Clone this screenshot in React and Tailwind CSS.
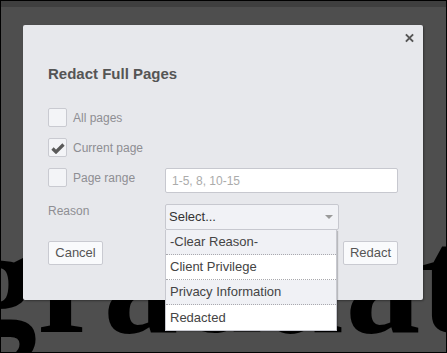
import React from 'react';

const reasons = [
  { label: '-Clear Reason-', shaded: true },
  { label: 'Client Privilege', shaded: false },
  { label: 'Privacy Information', shaded: true },
  { label: 'Redacted', shaded: false },
];

function Checkbox({ checked }) {
  return (
    <span className="flex h-[19px] w-[19px] shrink-0 items-center justify-center rounded-[2px] border border-[#c9cad1] bg-[#f3f4f7]">
      {checked && (
        <svg width="14" height="12" viewBox="0 0 14 12">
          <path d="M1.5 6.5 L5 10 L12.5 2.5" fill="none" stroke="#5a5a5a" strokeWidth="3.2" />
        </svg>
      )}
    </span>
  );
}

function Option({ label, checked }) {
  return (
    <div className="flex h-[19px] items-center gap-[6px]">
      <Checkbox checked={checked} />
      <span className="text-[12px] leading-none text-[#8e8e93]">{label}</span>
    </div>
  );
}

export default function App() {
  return (
    <div
      className="relative h-[353px] w-[447px] overflow-hidden border border-black bg-[#4e4e4e]"
      style={{ fontFamily: '"Liberation Sans", Arial, sans-serif' }}
    >
      {/* page behind the dialog */}
      <div className="h-[6px] bg-[#3f3f3f]" />
      <div
        className="ml-[-39px] mt-[199px] whitespace-nowrap text-[150px] font-bold leading-none text-black"
        style={{ fontFamily: '"Liberation Serif", "Times New Roman", serif' }}
      >
        graduation
      </div>

      {/* dialog */}
      <div className="absolute left-[22px] top-[24px] w-[400px] rounded-[2px] bg-[#e7e8ec] px-[25px] pb-[35px] pt-[40px] shadow-[1px_1px_2px_rgba(0,0,0,0.35)]">
        <button className="absolute right-[9px] top-[8px] flex h-[9px] w-[9px] items-center justify-center">
          <svg width="10" height="10" viewBox="0 0 10 10">
            <path d="M1 1 L9 9 M9 1 L1 9" stroke="#555" strokeWidth="2.2" />
          </svg>
        </button>

        <h1 className="h-[18px] text-[15px] font-bold leading-[18px] text-[#555]">Redact Full Pages</h1>

        <div className="mt-[25px] flex flex-col gap-[11px]">
          <Option label="All pages" />
          <Option label="Current page" checked />
          <div className="flex items-start">
            <div className="w-[117px]">
              <Option label="Page range" />
            </div>
            <div className="flex h-[25px] w-[233px] items-center rounded-[2px] border border-[#c7c8cf] bg-white px-[6px] text-[12px] text-[#ababab]">
              1-5, 8, 10-15
            </div>
          </div>

          <div className="flex items-start">
            <div className="w-[117px] pt-[1px] text-[12px] leading-[13px] text-[#8e8e93]">Reason</div>
            <div className="relative">
              <div className="flex h-[26px] w-[174px] items-center justify-between rounded-[2px] border border-[#c7c8cf] bg-[#f1f2f6] pl-[3px] pr-[5px] text-[13px] text-[#333]">
                <span>Select...</span>
                <span className="h-0 w-0 border-x-[4px] border-t-[4px] border-x-transparent border-t-[#9a9a9a]" />
              </div>
              <div className="absolute left-0 top-[26px] z-10 w-[172px] border-x border-b border-[#c7c8cf] shadow-[1px_1px_1px_rgba(0,0,0,0.2)]">
                {reasons.map((r) => (
                  <div
                    key={r.label}
                    className={`flex h-[25px] items-center border-b border-dotted border-[#a9a9ae] px-[4px] text-[13px] text-[#444] last:border-b-0 ${
                      r.shaded ? 'bg-[#f0f1f5]' : 'bg-white'
                    }`}
                  >
                    {r.label}
                  </div>
                ))}
              </div>
            </div>
          </div>

          <div className="flex items-center justify-between">
            <button className="h-[24px] w-[55px] rounded-[2px] border border-[#c9cad1] bg-[#f9fafc] text-[13px] text-[#555]">
              Cancel
            </button>
            <button className="h-[24px] w-[55px] rounded-[2px] border border-[#c9cad1] bg-[#f9fafc] text-[13px] text-[#555]">
              Redact
            </button>
          </div>
        </div>
      </div>
    </div>
  );
}
